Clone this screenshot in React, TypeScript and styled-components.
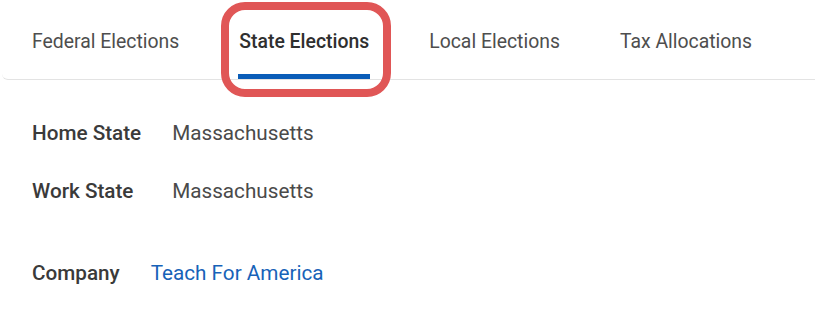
import styled, { createGlobalStyle } from "styled-components";

const GlobalStyle = createGlobalStyle`
  html, body {
    margin: 0;
    padding: 0;
    background: #ffffff;
    font-family: Roboto, "Liberation Sans", sans-serif;
  }
`;

const tabs = [
  { label: "Federal Elections", active: false },
  { label: "State Elections", active: true },
  { label: "Local Elections", active: false },
  { label: "Tax Allocations", active: false },
];

const App = () => {
  return (
    <Page>
      <GlobalStyle />
      <TabBar>
        {tabs.map((tab) => (
          <Tab key={tab.label} $active={tab.active}>
            {tab.label}
            {tab.active && <Highlight />}
          </Tab>
        ))}
      </TabBar>
      <Content>
        <FieldGrid>
          <Label>Home State</Label>
          <Value>Massachusetts</Value>
          <Label>Work State</Label>
          <Value>Massachusetts</Value>
        </FieldGrid>
        <CompanyRow>
          <Label>Company</Label>
          <Link href="#">Teach For America</Link>
        </CompanyRow>
      </Content>
    </Page>
  );
};

export default App;

const Page = styled.div`
  width: 815px;
  height: 328px;
  background: #ffffff;
  overflow: hidden;
`;

const TabBar = styled.div`
  display: flex;
  align-items: stretch;
  height: 79px;
  margin-left: 2px;
  padding-left: 30px;
  gap: 60px;
  border-bottom: 1px solid #e3e3e3;
  border-bottom-left-radius: 6px;
`;

const Tab = styled.div<{ $active: boolean }>`
  position: relative;
  display: flex;
  align-items: center;
  padding-top: 4px;
  font-size: 19.4px;
  font-weight: ${({ $active }) => ($active ? 500 : 400)};
  color: ${({ $active }) => ($active ? "#2f2f2f" : "#4e4e4e")};
  white-space: nowrap;

  ${({ $active }) =>
    $active &&
    `
    &::after {
      content: "";
      position: absolute;
      left: -1px;
      right: -1px;
      bottom: 0;
      height: 5px;
      background: #0a5db8;
    }
  `}
`;

const Highlight = styled.span`
  position: absolute;
  left: -18px;
  right: -22px;
  top: 2px;
  bottom: -18px;
  border: 8px solid #e05656;
  border-radius: 24px;
  pointer-events: none;
`;

const Content = styled.div`
  display: flex;
  flex-direction: column;
  padding: 41px 32px 0;
  gap: 57px;
`;

const FieldGrid = styled.div`
  display: grid;
  grid-template-columns: max-content max-content;
  column-gap: 31px;
  row-gap: 33px;
  align-items: center;
`;

const CompanyRow = styled.div`
  display: flex;
  align-items: center;
  gap: 31px;
`;

const Label = styled.span`
  font-size: 20.7px;
  font-weight: 500;
  color: #3a3a3a;
  line-height: 25px;
`;

const Value = styled.span`
  font-size: 20.7px;
  color: #4a4a4a;
  line-height: 25px;
`;

const Link = styled.a`
  font-size: 20.7px;
  color: #1762b8;
  line-height: 25px;
  text-decoration: none;
`;
